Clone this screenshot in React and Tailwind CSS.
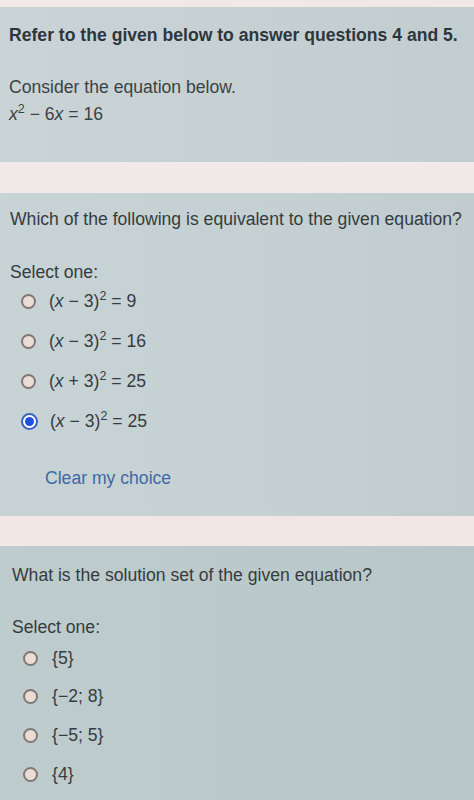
import React from "react";

function Radio({ checked }) {
  if (checked) {
    return (
      <span className="flex h-[17px] w-[17px] shrink-0 items-center justify-center rounded-full border-2 border-[#3a63c9] bg-white">
        <span className="h-[9px] w-[9px] rounded-full bg-[#1f4fe0]" />
      </span>
    );
  }
  return (
    <span className="h-[15px] w-[15px] shrink-0 rounded-full border-2 border-[#7f7874] bg-[#ecdcd6]" />
  );
}

function Sup() {
  return <sup className="text-[12.5px] -top-[7px]">2</sup>;
}

function Sq({ op, b }) {
  return (
    <span>
      (<i>x</i> {op} 3)<Sup /> = {b}
    </span>
  );
}

function Option({ checked, children, h, gap }) {
  return (
    <div className={`flex items-center ${gap} ${h}`}>
      <Radio checked={checked} />
      <span className="text-[17.6px] text-[#353c40]">{children}</span>
    </div>
  );
}

export default function App() {
  return (
    <div
      className="w-[474px] h-[800px] overflow-hidden bg-[#eee6e3]"
      style={{ fontFamily: '"Liberation Sans", Arial, sans-serif' }}
    >
      <div className="h-[7px] bg-[#f1e9e7]" />
      <section className="h-[155px] bg-[linear-gradient(90deg,#cad4d6,#c6d0d2_60%,#c2cdcf)] pl-[9px] pt-[16px]">
        <h2 className="text-[17.6px] font-bold leading-[24px] text-[#2d363b]">
          Refer to the given below to answer questions 4 and 5.
        </h2>
        <p className="mt-[28px] text-[17.6px] leading-[24px] text-[#3a4246]">
          Consider the equation below.
        </p>
        <p className="mt-[2px] text-[17.6px] leading-[26px] text-[#3a4246]">
          <i>x</i>
          <Sup /> − 6<i>x</i> = 16
        </p>
      </section>
      <div className="h-[31px] bg-[#f2eae8]" />
      <section className="h-[323px] bg-[linear-gradient(90deg,#c8d3d5,#c5d0d2_60%,#c0cccd)] pl-[10px] pt-[14px]">
        <p className="text-[17.6px] leading-[24px] text-[#353c40]">
          Which of the following is equivalent to the given equation?
        </p>
        <p className="mt-[29px] text-[17.6px] leading-[24px] text-[#353c40]">Select one:</p>
        <div className="-mt-[3px] pl-[11px]">
          <Option h="h-[40px]" gap="gap-[13px]">
            <Sq op="−" b="9" />
          </Option>
          <Option h="h-[40px]" gap="gap-[13px]">
            <Sq op="−" b="16" />
          </Option>
          <Option h="h-[40px]" gap="gap-[13px]">
            <Sq op="+" b="25" />
          </Option>
          <Option h="h-[40px]" gap="gap-[12px]" checked>
            <Sq op="−" b="25" />
          </Option>
        </div>
        <p className="mt-[25px] pl-[35px] text-[17.6px] leading-[24px] text-[#3f68a6]">
          Clear my choice
        </p>
      </section>
      <div className="h-[30px] bg-[#f1e8e5]" />
      <section className="h-[254px] bg-[linear-gradient(90deg,#bfcccd,#bcc9ca_60%,#b8c6c7)] pl-[12px] pt-[17px]">
        <p className="text-[17.6px] leading-[24px] text-[#353c40]">
          What is the solution set of the given equation?
        </p>
        <p className="mt-[28px] text-[17.6px] leading-[24px] text-[#353c40]">Select one:</p>
        <div className="mt-[0px] pl-[11px]">
          <Option h="h-[38px]" gap="gap-[14px]">{"{5}"}</Option>
          <Option h="h-[39px]" gap="gap-[14px]">{"{−2; 8}"}</Option>
          <Option h="h-[39px]" gap="gap-[14px]">{"{−5; 5}"}</Option>
          <Option h="h-[38px]" gap="gap-[14px]">{"{4}"}</Option>
        </div>
      </section>
    </div>
  );
}
